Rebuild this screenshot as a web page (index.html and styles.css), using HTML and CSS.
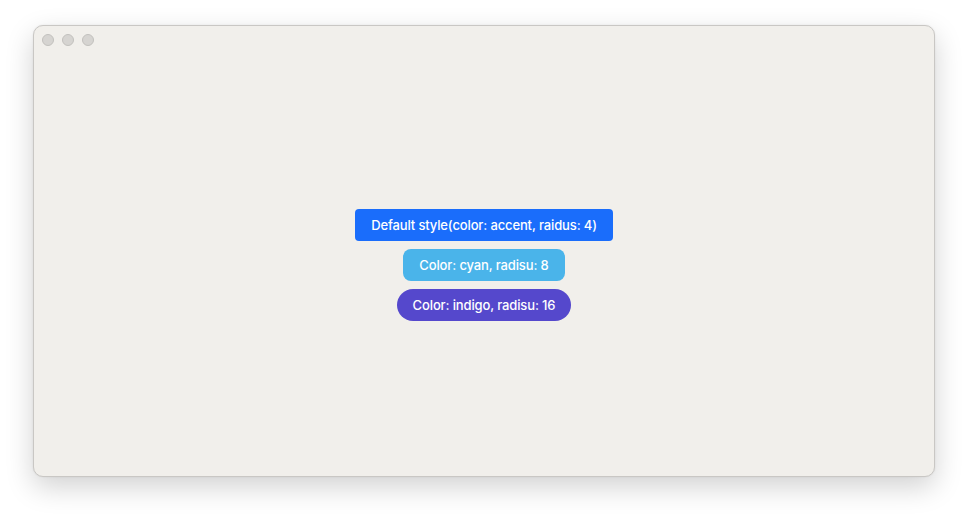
FILE: index.html
```html
<!DOCTYPE html>
<html>
<head>
<meta charset="utf-8">
<link rel="stylesheet" href="styles.css">
</head>
<body>
<div class="stage">
  <div class="window">
    <div class="titlebar">
      <span class="light"></span>
      <span class="light"></span>
      <span class="light"></span>
    </div>
    <div class="content">
      <button class="btn btn-accent">Default style(color: accent, raidus: 4)</button>
      <button class="btn btn-cyan">Color: cyan, radisu: 8</button>
      <button class="btn btn-indigo">Color: indigo, radisu: 16</button>
    </div>
  </div>
</div>
</body>
</html>
```
FILE: styles.css
```css
html, body {
  margin: 0;
  padding: 0;
  background: #ffffff;
  width: 968px;
  height: 518px;
  overflow: hidden;
}
.stage {
  padding: 25px 33px 0 33px;
}
.window {
  width: 900px;
  height: 450px;
  background: #f1efeb;
  border: 1px solid #c9c7c4;
  border-radius: 10px;
  box-shadow: 0 10px 28px rgba(0, 0, 0, 0.18), 0 0 2px rgba(0,0,0,0.08);
  display: flex;
  flex-direction: column;
  overflow: hidden;
}
.titlebar {
  height: 28px;
  display: flex;
  align-items: center;
  gap: 8px;
  padding-left: 8px;
  flex-shrink: 0;
}
.light {
  width: 12px;
  height: 12px;
  border-radius: 50%;
  background: #d6d4d1;
  border: 1px solid #c2c0bd;
  box-sizing: border-box;
}
.content {
  flex: 1;
  display: flex;
  flex-direction: column;
  align-items: center;
  justify-content: center;
  gap: 8px;
  padding-bottom: 1px;
}
.btn {
  font-family: Inter, "Liberation Sans", sans-serif;
  font-size: 13px;
  font-weight: 500;
  letter-spacing: -0.13px;
  color: #ffffff;
  border: none;
  height: 32px;
  padding: 0 16px;
  line-height: 32px;
  cursor: pointer;
}
.btn-accent {
  background: #1a6dfb;
  border-radius: 4px;
}
.btn-cyan {
  background: #4ab4ea;
  border-radius: 8px;
}
.btn-indigo {
  background: #5548cc;
  border-radius: 16px;
}
```
